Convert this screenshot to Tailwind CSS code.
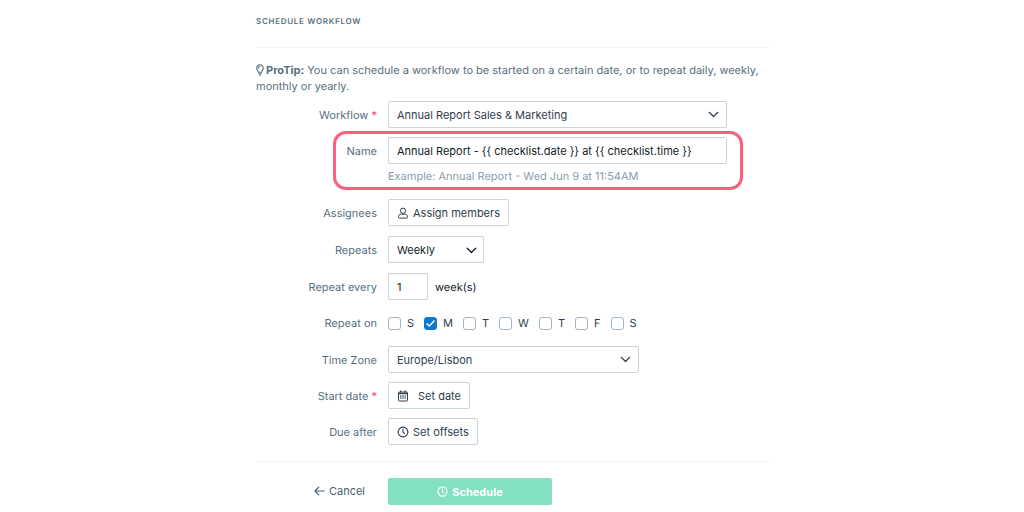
<!DOCTYPE html>
<html lang="en">
<head>
<meta charset="utf-8">
<meta name="viewport" content="width=device-width, initial-scale=1">
<title>Schedule workflow</title>
<script src="https://cdn.jsdelivr.net/npm/@tailwindcss/browser@4"></script>
</head>
<body class="bg-white pl-0.5 font-['Inter',sans-serif] text-[11px] leading-4 text-[#566f80] [text-rendering:geometricPrecision]">
<main class="mx-auto max-w-[514px] pt-[13px]">
  <h1 class="pb-[18px] text-[8px] font-semibold leading-4 tracking-[0.7px] uppercase text-[#566f80]">Schedule workflow</h1>
  <hr class="border-[#f2f4f5]">
  <p class="mt-[14px]">
    <svg class="inline-block h-3 w-2 align-[-2px]" viewBox="0 0 8 12" fill="none" stroke="currentColor" stroke-width="1.1" stroke-linecap="round" aria-hidden="true"><path d="M2.4 8.3C2.3 7 .7 6.1.7 4.1a3.3 3.3 0 0 1 6.6 0c0 2-1.6 2.9-1.7 4.2zM2.6 9.8h2.8M3.4 11.2h1.2M2.3 4.1c0-.9.7-1.6 1.6-1.6"/></svg><strong class="ml-0.5 font-bold">ProTip:</strong> You can schedule a workflow to be started on a certain date, or to repeat daily, weekly, monthly or yearly.
  </p>

  <form class="mt-[7px]" onsubmit="return false">
    <div class="grid grid-cols-[121px_1fr] gap-x-[11px]">
      <label for="workflow" class="text-right leading-7">Workflow <span class="text-[#ff3b5c]">*</span></label>
      <div class="relative mr-[43px]">
        <select id="workflow" class="block h-[27px] w-full appearance-none rounded-[2px] border border-[#c8d4dc] bg-white px-2 text-[#2f3e4e]"><option>Annual Report Sales &amp; Marketing</option></select>
        <svg class="pointer-events-none absolute top-[10px] right-[8px] h-[7px] w-[11px] text-[#2f3e4e]" viewBox="0 0 11 7" fill="none" stroke="currentColor" stroke-width="1.2" stroke-linecap="round" stroke-linejoin="round" aria-hidden="true"><path d="M1.2 1.3 5.5 5.5 9.8 1.3"/></svg>
      </div>
    </div>

    <div class="relative mt-2 grid grid-cols-[121px_1fr] gap-x-[11px]">
      <div class="pointer-events-none absolute -top-1.5 right-[27px] -bottom-1.5 left-[77px] rounded-[13px] border-3 border-[#fb5f7c]"></div>
      <label for="name" class="text-right leading-7">Name</label>
      <div class="mr-[43px]">
        <input id="name" type="text" value="Annual Report - {{ checklist.date }} at {{ checklist.time }}" class="block h-[27px] w-full rounded-[2px] border border-[#c8d4dc] bg-white px-2 text-[#111c28]">
        <p class="mt-1 text-[#8b9dab]">Example: Annual Report - Wed Jun 9 at 11:54AM</p>
      </div>
    </div>

    <div class="mt-[15px] grid grid-cols-[121px_1fr] gap-x-[11px]">
      <label for="assign" class="text-right leading-7">Assignees</label>
      <div>
        <button id="assign" type="button" class="flex h-[27px] items-center gap-1 rounded-[2px] border border-[#c8d4dc] px-2 text-[#2f3e4e]">
          <svg class="size-3" viewBox="0 0 12 12" fill="none" stroke="currentColor" stroke-width="1" stroke-linejoin="round" aria-hidden="true"><circle cx="6" cy="3.7" r="2.6"/><path d="M4.2 6.9C2.4 7.3 1.5 8.4 1.5 9.7v.4c0 .6.4 1 1 1h7c.6 0 1-.4 1-1v-.4c0-1.3-.9-2.4-2.7-2.8-1.1.7-2.5.7-3.6 0z"/></svg>
          Assign members
        </button>
      </div>
    </div>

    <div class="mt-[9px] grid grid-cols-[121px_1fr] gap-x-[11px]">
      <label for="repeats" class="text-right leading-7">Repeats</label>
      <div class="relative w-24">
        <select id="repeats" class="block h-[27px] w-full appearance-none rounded-[2px] border border-[#c8d4dc] bg-white px-2 text-[#111c28]"><option>Weekly</option></select>
        <svg class="pointer-events-none absolute top-[11px] right-[7px] h-[7px] w-[11px] text-[#111c28]" viewBox="0 0 11 7" fill="none" stroke="currentColor" stroke-width="1.3" stroke-linecap="round" stroke-linejoin="round" aria-hidden="true"><path d="M1.2 1.3 5.5 5.5 9.8 1.3"/></svg>
      </div>
    </div>

    <div class="mt-[9px] grid grid-cols-[121px_1fr] gap-x-[11px]">
      <label for="every" class="text-right leading-7">Repeat every</label>
      <div class="flex items-start gap-[7px] text-[#111c28]">
        <input id="every" type="text" inputmode="numeric" value="1" class="h-[27px] w-10 rounded-[2px] border border-[#c8d4dc] bg-white px-2">
        <span class="leading-7">week(s)</span>
      </div>
    </div>

    <fieldset class="mt-2 grid grid-cols-[121px_1fr] gap-x-[11px]" aria-labelledby="days">
      <span id="days" class="text-right leading-7">Repeat on</span>
      <div class="flex items-center gap-[10px] text-[#2f3e4e]">
        <label class="flex items-center gap-1.5"><input type="checkbox" class="size-[13px] appearance-none rounded-[3px] border border-[#a3b5c3]">S</label>
        <label class="flex items-center gap-1.5">
          <span class="relative flex">
            <input type="checkbox" checked class="peer size-[13px] appearance-none rounded-[3px] border border-[#a3b5c3] checked:border-[#0b78d0] checked:bg-[#0b78d0]">
            <svg class="pointer-events-none absolute inset-0 hidden size-[13px] peer-checked:block" viewBox="0 0 13 13" fill="none" stroke="white" stroke-width="1.5" stroke-linecap="round" stroke-linejoin="round" aria-hidden="true"><path d="M3 6.8 5.3 9 10 4"/></svg>
          </span>M</label>
        <label class="flex items-center gap-1.5"><input type="checkbox" class="size-[13px] appearance-none rounded-[3px] border border-[#a3b5c3]">T</label>
        <label class="flex items-center gap-1.5"><input type="checkbox" class="size-[13px] appearance-none rounded-[3px] border border-[#a3b5c3]">W</label>
        <label class="flex items-center gap-1.5"><input type="checkbox" class="size-[13px] appearance-none rounded-[3px] border border-[#a3b5c3]">T</label>
        <label class="flex items-center gap-1.5"><input type="checkbox" class="size-[13px] appearance-none rounded-[3px] border border-[#a3b5c3]">F</label>
        <label class="flex items-center gap-1.5"><input type="checkbox" class="size-[13px] appearance-none rounded-[3px] border border-[#a3b5c3]">S</label>
      </div>
    </fieldset>

    <div class="mt-[9px] grid grid-cols-[121px_1fr] gap-x-[11px]">
      <label for="zone" class="text-right leading-7">Time Zone</label>
      <div class="relative w-[251px]">
        <select id="zone" class="block h-[27px] w-full appearance-none rounded-[2px] border border-[#c8d4dc] bg-white px-2 text-[#2f3e4e]"><option>Europe/Lisbon</option></select>
        <svg class="pointer-events-none absolute top-[10px] right-[8px] h-[7px] w-[11px] text-[#2f3e4e]" viewBox="0 0 11 7" fill="none" stroke="currentColor" stroke-width="1.2" stroke-linecap="round" stroke-linejoin="round" aria-hidden="true"><path d="M1.2 1.3 5.5 5.5 9.8 1.3"/></svg>
      </div>
    </div>

    <div class="mt-2 grid grid-cols-[121px_1fr] gap-x-[11px]">
      <label for="start" class="text-right leading-7">Start date <span class="text-[#ff3b5c]">*</span></label>
      <div>
        <button id="start" type="button" class="flex h-[27px] items-center gap-[9px] rounded-[2px] border border-[#c8d4dc] px-2 text-[#2f3e4e]">
          <svg class="size-3" viewBox="0 0 12 12" fill="none" stroke="currentColor" aria-hidden="true"><rect x="1.5" y="2" width="9" height="9" rx="1"/><path d="M1.5 3.5h9" stroke-width="1.4"/><path d="M3.7.5v2M8.3.5v2" stroke-width="1.2"/><path d="M3.2 6h5.6M3.2 8h5.6" stroke-width="1.4" stroke-dasharray="1.2 1"/></svg>
          Set date
        </button>
      </div>
    </div>

    <div class="mt-2 grid grid-cols-[121px_1fr] gap-x-[11px]">
      <label for="due" class="text-right leading-7">Due after</label>
      <div>
        <button id="due" type="button" class="flex h-[27px] items-center gap-1 rounded-[2px] border border-[#c8d4dc] px-2 text-[#2f3e4e]">
          <svg class="size-3" viewBox="0 0 12 12" fill="none" stroke="currentColor" stroke-width="1.1" stroke-linecap="round" stroke-linejoin="round" aria-hidden="true"><circle cx="6" cy="6" r="4.9"/><path d="M6 3v3.2l1.6 1.5"/></svg>
          Set offsets
        </button>
      </div>
    </div>

    <hr class="mt-[15px] border-[#f2f4f5]">

    <div class="mt-4 grid grid-cols-[121px_1fr] gap-x-[11px]">
      <div class="flex justify-end pr-3">
        <button type="button" class="flex h-[26px] items-center gap-1 text-[#4a5f70]">
          <svg class="h-2.5 w-[11px]" viewBox="0 0 11 10" fill="none" stroke="currentColor" stroke-width="1.2" stroke-linecap="round" stroke-linejoin="round" aria-hidden="true"><path d="M10.2 5H1M4.8 1.1.9 5l3.9 3.9"/></svg>
          Cancel
        </button>
      </div>
      <button type="submit" class="flex h-[27px] w-[164px] items-center justify-center gap-1 rounded-[2px] bg-[#83e0c3] font-bold text-white">
        <svg class="size-[11px]" viewBox="0 0 12 12" fill="none" stroke="currentColor" stroke-width="1.2" stroke-linecap="round" stroke-linejoin="round" aria-hidden="true"><circle cx="6" cy="6" r="5"/><path d="M6 3v3.2l1.6 1.5"/></svg>
        Schedule
      </button>
    </div>
  </form>
</main>
</body>
</html>
